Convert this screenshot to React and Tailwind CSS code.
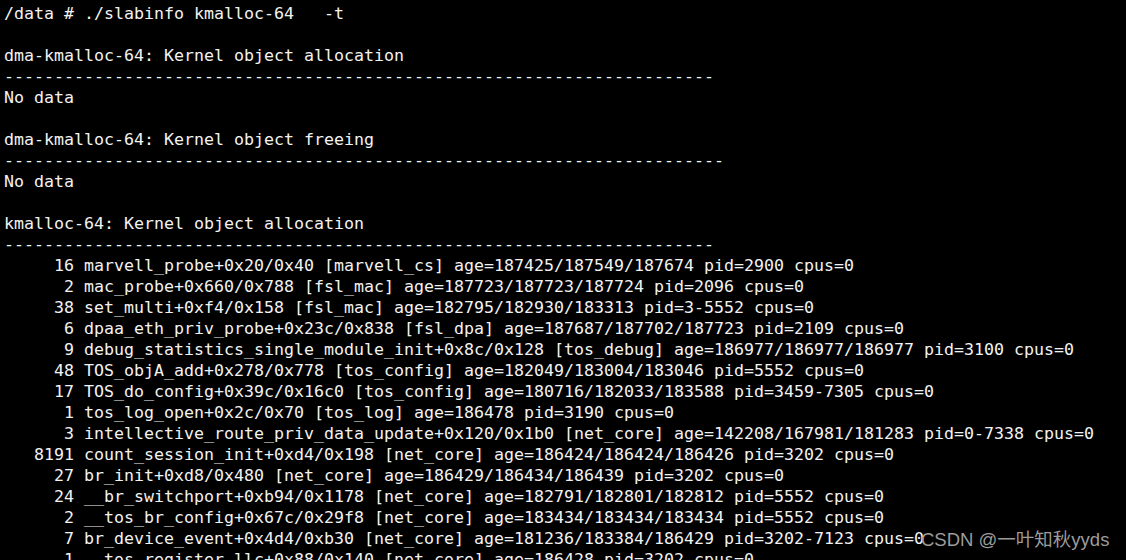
import React from "react";

const lines = [
  "/data # ./slabinfo kmalloc-64   -t",
  "",
  "dma-kmalloc-64: Kernel object allocation",
  "-".repeat(71),
  "No data",
  "",
  "dma-kmalloc-64: Kernel object freeing",
  "-".repeat(72),
  "No data",
  "",
  "kmalloc-64: Kernel object allocation",
  "-".repeat(71),
  "     16 marvell_probe+0x20/0x40 [marvell_cs] age=187425/187549/187674 pid=2900 cpus=0",
  "      2 mac_probe+0x660/0x788 [fsl_mac] age=187723/187723/187724 pid=2096 cpus=0",
  "     38 set_multi+0xf4/0x158 [fsl_mac] age=182795/182930/183313 pid=3-5552 cpus=0",
  "      6 dpaa_eth_priv_probe+0x23c/0x838 [fsl_dpa] age=187687/187702/187723 pid=2109 cpus=0",
  "      9 debug_statistics_single_module_init+0x8c/0x128 [tos_debug] age=186977/186977/186977 pid=3100 cpus=0",
  "     48 TOS_objA_add+0x278/0x778 [tos_config] age=182049/183004/183046 pid=5552 cpus=0",
  "     17 TOS_do_config+0x39c/0x16c0 [tos_config] age=180716/182033/183588 pid=3459-7305 cpus=0",
  "      1 tos_log_open+0x2c/0x70 [tos_log] age=186478 pid=3190 cpus=0",
  "      3 intellective_route_priv_data_update+0x120/0x1b0 [net_core] age=142208/167981/181283 pid=0-7338 cpus=0",
  "   8191 count_session_init+0xd4/0x198 [net_core] age=186424/186424/186426 pid=3202 cpus=0",
  "     27 br_init+0xd8/0x480 [net_core] age=186429/186434/186439 pid=3202 cpus=0",
  "     24 __br_switchport+0xb94/0x1178 [net_core] age=182791/182801/182812 pid=5552 cpus=0",
  "      2 __tos_br_config+0x67c/0x29f8 [net_core] age=183434/183434/183434 pid=5552 cpus=0",
  "      7 br_device_event+0x4d4/0xb30 [net_core] age=181236/183384/186429 pid=3202-7123 cpus=0",
  "      1 __tos_register_llc+0x88/0x140 [net_core] age=186428 pid=3202 cpus=0",
];

export default function App() {
  return (
    <div className="relative w-[1126px] h-[560px] overflow-hidden bg-black">
      <div
        className="pl-[4px] pt-[3px] text-[16.62px] leading-[21px] text-[#f2f2f2] whitespace-pre"
        style={{ fontFamily: '"DejaVu Sans Mono", monospace' }}
      >
        {lines.map((l, i) => (
          <div key={i} className="h-[21px]">
            {l}
          </div>
        ))}
      </div>

      {/* watermark */}
      <div
        className="absolute left-[921px] top-[528px] text-[18.5px] leading-[23px] text-[#9c9c9c] whitespace-nowrap"
        style={{ fontFamily: 'Arial, "Liberation Sans", "Noto Sans CJK SC", sans-serif' }}
      >
        CSDN @一叶知秋yyds
      </div>
    </div>
  );
}
